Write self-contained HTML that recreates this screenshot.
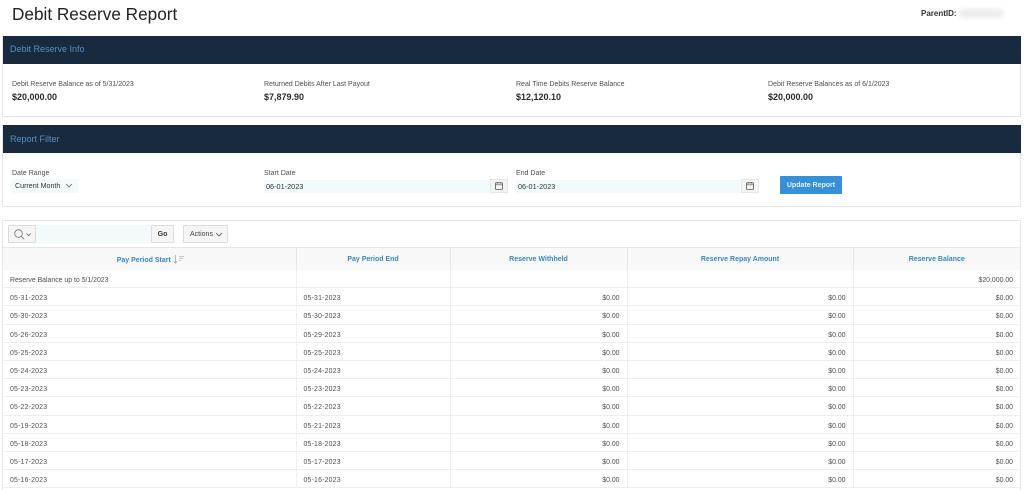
<!DOCTYPE html>
<html><head><meta charset="utf-8">
<style>
html,body{margin:0;padding:0;background:#fff}
body{width:1024px;height:490px;overflow:hidden;position:relative;font-family:"Liberation Sans",sans-serif;color:#3a3a3a}
#w{position:absolute;left:0;top:0;width:1024px;height:490px;filter:blur(.35px)}
.a{position:absolute;white-space:nowrap}
.box{position:absolute;box-sizing:border-box;border:1px solid #e6e6e6;background:#fff}
.bar{position:absolute;left:3px;width:1018px;background:#182a3d;color:#5a8fbd;font-size:9px}
.l{font-size:7px;color:#505050;line-height:9px}
.v{font-size:9px;font-weight:bold;color:#2b2b2b;line-height:10px}
.inp{position:absolute;background:#f3fafb;height:13px;font-size:7.3px;line-height:13px;color:#333;padding-left:2px;box-sizing:border-box}
.cal{position:absolute;width:18px;height:14px;background:#f4f4f4;border:1px solid #e6e6e6;box-sizing:border-box}
.btn{position:absolute;background:#f5f5f5;border:1px solid #dcdcdc;box-sizing:border-box;border-radius:1px}
table{position:absolute;left:3px;top:247px;width:1017px;border-collapse:collapse;table-layout:fixed;font-size:6.9px;color:#505050}
th{height:22px;padding:0;background:#f8f8f8;color:#3a87c8;font-size:7px;font-weight:bold;border-right:1px solid #e6e6e6;border-top:1px solid #e6e6e6;border-bottom:0;text-align:center}
td{height:13.2px;padding:4px 7px 0;border-right:1px solid #f0f0f0;border-bottom:1px solid #eee;box-sizing:content-box;line-height:7px}
td.r{text-align:right}
tr:nth-child(n+3) td:nth-child(-n+2){letter-spacing:.2px}
th:last-child,td:last-child{border-right:0}
</style></head><body>
<div id="w">
<div class="a" style="left:12px;top:3px;font-size:17.2px;line-height:22px;color:#222">Debit Reserve Report</div>
<div class="a" style="left:921px;top:9px;font-size:8px;font-weight:bold;line-height:9px;color:#333">ParentID:</div>
<div class="a" style="left:959px;top:9px;width:44px;height:9px;background:#ececec;filter:blur(2px)"></div>

<div class="box" style="left:2px;top:36px;width:1019px;height:81px"></div>
<div class="bar" style="top:36px;height:27.5px;line-height:27px"><span style="position:absolute;left:7px">Debit Reserve Info</span></div>
<div class="a l" style="left:12px;top:80px">Debit Reserve Balance as of 5/31/2023</div>
<div class="a v" style="left:12px;top:92px">$20,000.00</div>
<div class="a l" style="left:264px;top:80px">Returned Debits After Last Payout</div>
<div class="a v" style="left:264px;top:92px">$7,879.90</div>
<div class="a l" style="left:516px;top:80px">Real Time Debits Reserve Balance</div>
<div class="a v" style="left:516px;top:92px">$12,120.10</div>
<div class="a l" style="left:768px;top:80px">Debit Reserve Balances as of 6/1/2023</div>
<div class="a v" style="left:768px;top:92px">$20,000.00</div>

<div class="box" style="left:2px;top:125px;width:1019px;height:82px"></div>
<div class="bar" style="top:125px;height:28px;line-height:28px"><span style="position:absolute;left:7px">Report Filter</span></div>
<div class="a l" style="left:12px;top:169px">Date Range</div>
<div class="inp" style="left:12px;top:179px;width:66px;height:14px;padding-left:3px;font-size:7.1px;line-height:15px">Current Month</div>
<svg class="a" style="left:65px;top:183px" width="8" height="5" viewBox="0 0 8 5"><path d="M1 1l3 3 3-3" fill="none" stroke="#666" stroke-width=".8"/></svg>
<div class="a l" style="left:264px;top:169px">Start Date</div>
<div class="inp" style="left:264px;top:180px;width:226px">06-01-2023</div>
<div class="cal" style="left:490px;top:179px"><svg style="position:absolute;left:3px;top:1px" width="10" height="10" viewBox="0 0 10 10"><rect x="1.5" y="1.8" width="7" height="6.7" rx="1" fill="none" stroke="#555" stroke-width=".8"/><path d="M1.5 3.8h7M3.3 1v1.4M6.7 1v1.4" stroke="#555" stroke-width=".7"/></svg></div>
<div class="a l" style="left:516px;top:169px">End Date</div>
<div class="inp" style="left:516px;top:180px;width:226px">06-01-2023</div>
<div class="cal" style="left:741px;top:179px"><svg style="position:absolute;left:3px;top:1px" width="10" height="10" viewBox="0 0 10 10"><rect x="1.5" y="1.8" width="7" height="6.7" rx="1" fill="none" stroke="#555" stroke-width=".8"/><path d="M1.5 3.8h7M3.3 1v1.4M6.7 1v1.4" stroke="#555" stroke-width=".7"/></svg></div>
<div class="a" style="left:780px;top:176px;width:62px;height:18px;background:#3590d8;border-radius:1px;color:#e4f0fa;font-size:7px;font-weight:bold;line-height:20px;text-align:center">Update Report</div>

<div class="box" style="left:2px;top:220px;width:1019px;height:270px;border-bottom:0"></div>
<div class="btn" style="left:8px;top:225px;width:28px;height:18px"><svg style="position:absolute;left:4px;top:2px" width="21" height="13" viewBox="0 0 21 13"><circle cx="5.5" cy="5.5" r="3.8" fill="none" stroke="#777" stroke-width=".8"/><path d="M8.2 8.2l3 3" stroke="#777" stroke-width=".8"/><path d="M13.5 5.5l2.2 2.2 2.2-2.2" fill="none" stroke="#666" stroke-width=".8"/></svg></div>
<div class="a" style="left:36px;top:225px;width:115px;height:18px;background:#f3fafb"></div>
<div class="btn" style="left:151px;top:225px;width:23px;height:18px;font-size:7px;font-weight:bold;line-height:18px;text-align:center;color:#333">Go</div>
<div class="btn" style="left:183px;top:225px;width:45px;height:18px;font-size:7px;line-height:18px;color:#444;padding-left:6px">Actions<svg style="position:absolute;left:31px;top:6px" width="8" height="5" viewBox="0 0 8 5"><path d="M1 1l3 3 3-3" fill="none" stroke="#555" stroke-width=".8"/></svg></div>

<table>
<colgroup><col style="width:293px"><col style="width:154px"><col style="width:177px"><col style="width:226px"><col style="width:167px"></colgroup>
<tr><th><span style="position:relative;left:1px">Pay Period Start <svg style="vertical-align:-2px" width="11" height="9" viewBox="0 0 11 9"><path d="M2.5 0v8M.8 6.3l1.7 1.9 1.7-1.9" fill="none" stroke="#aaa" stroke-width=".8"/><path d="M6 1.5h5M6 3.5h4M6 5.5h2.5" stroke="#bbb" stroke-width=".7"/></svg></span></th><th>Pay Period End</th><th>Reserve Withheld</th><th>Reserve Repay Amount</th><th>Reserve Balance</th></tr>
<tr><td>Reserve Balance up to 5/1/2023</td><td></td><td></td><td></td><td class="r">$20,000.00</td></tr>
<tr><td>05-31-2023</td><td>05-31-2023</td><td class="r">$0.00</td><td class="r">$0.00</td><td class="r">$0.00</td></tr>
<tr><td>05-30-2023</td><td>05-30-2023</td><td class="r">$0.00</td><td class="r">$0.00</td><td class="r">$0.00</td></tr>
<tr><td>05-26-2023</td><td>05-29-2023</td><td class="r">$0.00</td><td class="r">$0.00</td><td class="r">$0.00</td></tr>
<tr><td>05-25-2023</td><td>05-25-2023</td><td class="r">$0.00</td><td class="r">$0.00</td><td class="r">$0.00</td></tr>
<tr><td>05-24-2023</td><td>05-24-2023</td><td class="r">$0.00</td><td class="r">$0.00</td><td class="r">$0.00</td></tr>
<tr><td>05-23-2023</td><td>05-23-2023</td><td class="r">$0.00</td><td class="r">$0.00</td><td class="r">$0.00</td></tr>
<tr><td>05-22-2023</td><td>05-22-2023</td><td class="r">$0.00</td><td class="r">$0.00</td><td class="r">$0.00</td></tr>
<tr><td>05-19-2023</td><td>05-21-2023</td><td class="r">$0.00</td><td class="r">$0.00</td><td class="r">$0.00</td></tr>
<tr><td>05-18-2023</td><td>05-18-2023</td><td class="r">$0.00</td><td class="r">$0.00</td><td class="r">$0.00</td></tr>
<tr><td>05-17-2023</td><td>05-17-2023</td><td class="r">$0.00</td><td class="r">$0.00</td><td class="r">$0.00</td></tr>
<tr><td>05-16-2023</td><td>05-16-2023</td><td class="r">$0.00</td><td class="r">$0.00</td><td class="r">$0.00</td></tr>
</table>
</div>
</body></html>
